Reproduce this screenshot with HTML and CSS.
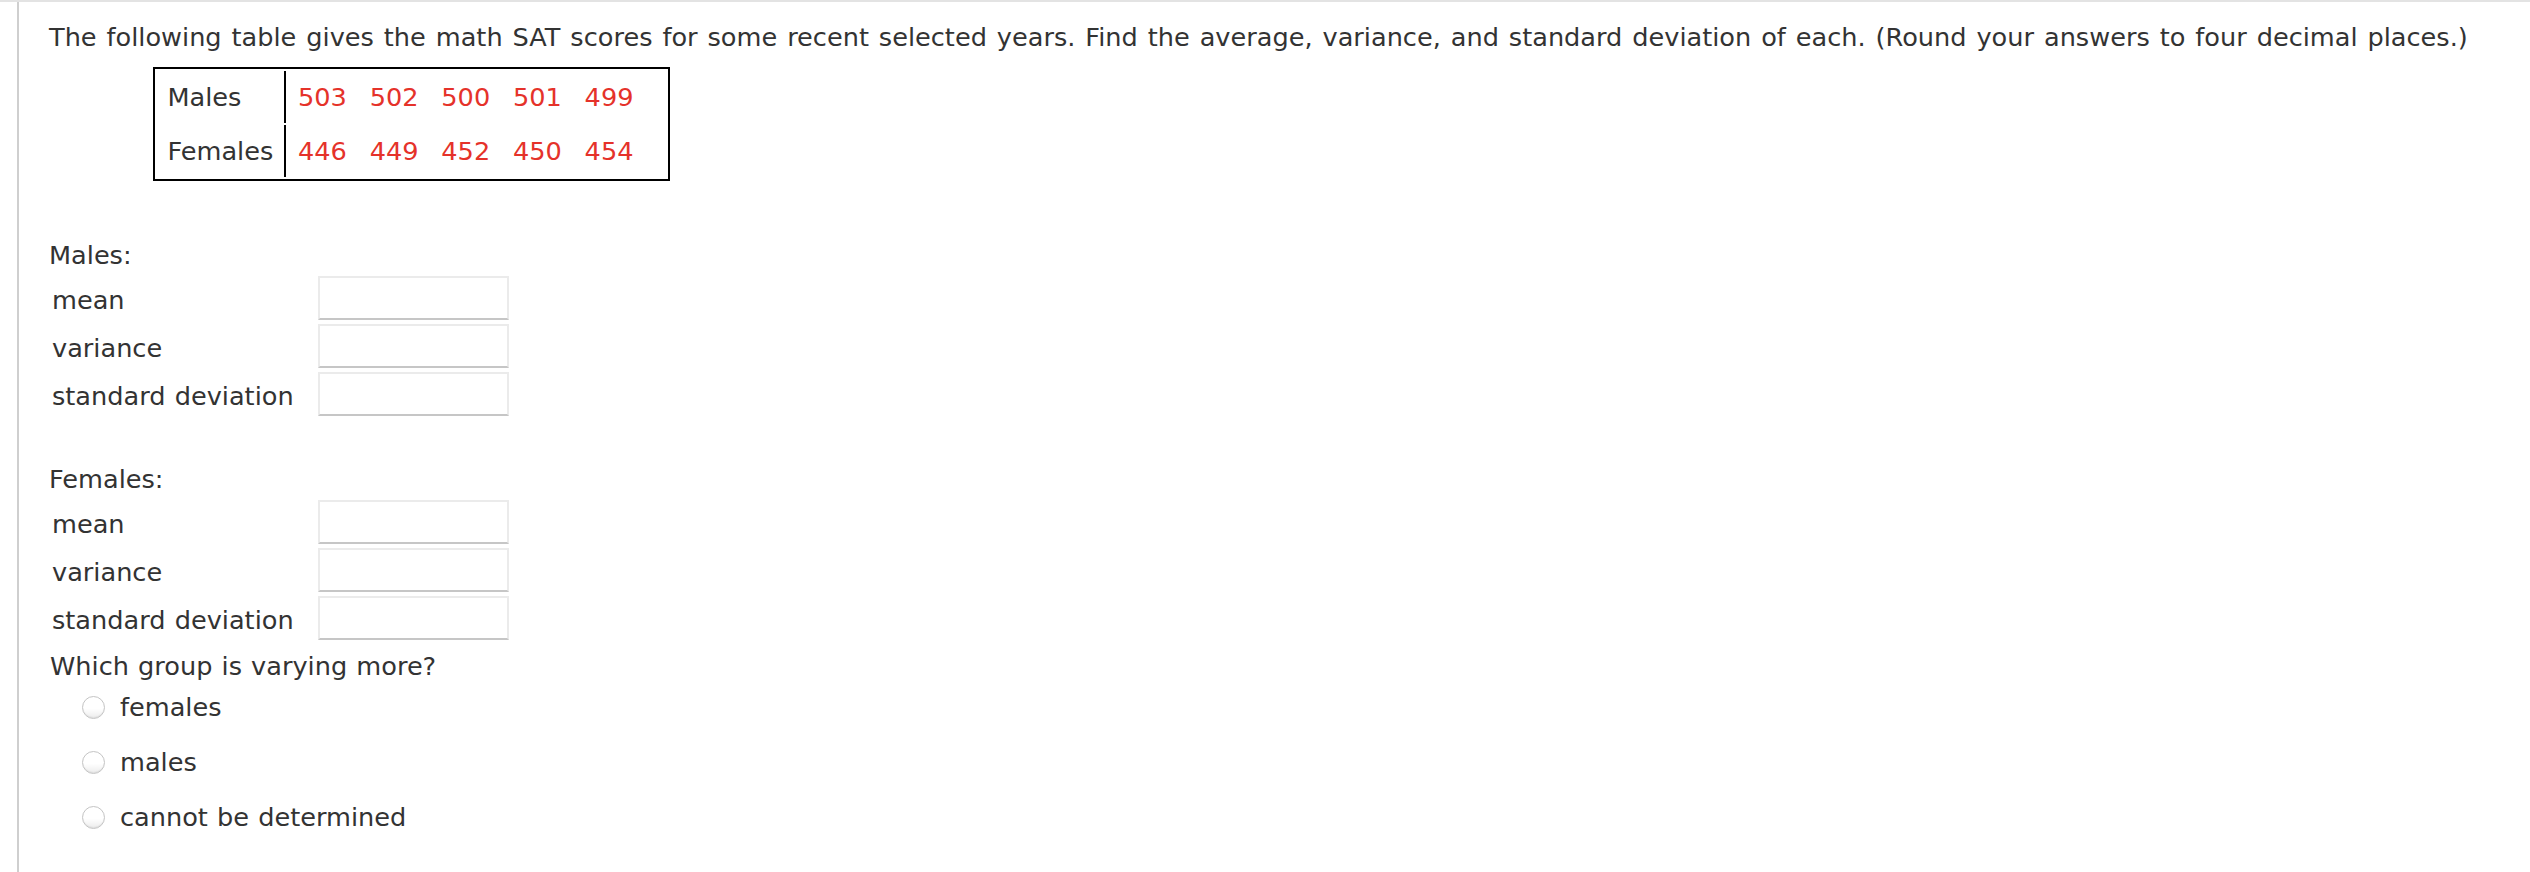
FILE: index.html
```html
<!DOCTYPE html>
<html lang="en">
<head>
<meta charset="utf-8">
<title>SAT scores</title>
<link rel="stylesheet" href="styles.css">
</head>
<body>
<div class="page">
  <div class="frame">
    <p class="prompt">The following table gives the math SAT scores for some recent selected years. Find the average, variance, and standard deviation of each. (Round your answers to four decimal places.)</p>
    <table class="data">
      <tr>
        <th class="rowhead">Males</th>
        <td>503</td><td>502</td><td>500</td><td>501</td><td class="last">499</td>
      </tr>
      <tr>
        <th class="rowhead">Females</th>
        <td>446</td><td>449</td><td>452</td><td>450</td><td class="last">454</td>
      </tr>
    </table>

    <div class="group">
      <div class="group-title">Males:</div>
      <div class="fields">
        <label class="field"><span class="label">mean</span><input class="answer" type="text"></label>
        <label class="field"><span class="label">variance</span><input class="answer" type="text"></label>
        <label class="field"><span class="label">standard deviation</span><input class="answer" type="text"></label>
      </div>
    </div>

    <div class="group second">
      <div class="group-title">Females:</div>
      <div class="fields">
        <label class="field"><span class="label">mean</span><input class="answer" type="text"></label>
        <label class="field"><span class="label">variance</span><input class="answer" type="text"></label>
        <label class="field"><span class="label">standard deviation</span><input class="answer" type="text"></label>
      </div>
    </div>

    <div class="question">Which group is varying more?</div>
    <div class="choices">
      <div class="choice"><span class="radio"></span><span class="choice-text">females</span></div>
      <div class="choice"><span class="radio"></span><span class="choice-text">males</span></div>
      <div class="choice"><span class="radio"></span><span class="choice-text">cannot be determined</span></div>
    </div>
  </div>
</div>
</body>
</html>
```
FILE: styles.css
```css
html, body {
  margin: 0;
  padding: 0;
  background: #ffffff;
}

body {
  font-family: "DejaVu Sans", Verdana, sans-serif;
  font-size: 25.6px;
  color: #333333;
  word-spacing: 1px;
}

.page {
  border-top: 2px solid #e3e3e3;
  height: 870px;
  overflow: hidden;
}

.frame {
  margin-left: 17px;
  border-left: 2px solid #cfcfcf;
  padding-left: 30px;
  height: 100%;
  box-sizing: border-box;
  display: flex;
  flex-direction: column;
  align-items: flex-start;
}

.prompt {
  margin: 0;
  padding-top: 17px;
  line-height: 36px;
  white-space: nowrap;
  word-spacing: 1.8px;
}

.data {
  margin-top: 12px;
  margin-left: 104px;
  border: 2px solid #000000;
  border-collapse: separate;
  border-spacing: 2px;
  word-spacing: 0;
}

.data th,
.data td {
  height: 52px;
  padding: 0 10.4px;
  vertical-align: middle;
  font-weight: normal;
  text-align: left;
}

.data td {
  color: #e5322a;
}

.data .rowhead {
  border-right: 2px solid #000000;
  color: #333333;
}

.data td.last {
  padding-right: 33px;
}

.group {
  margin-top: 56px;
}

.group.second {
  margin-top: 45px;
}

.group-title {
  line-height: 36px;
  margin-bottom: 3px;
}

.fields {
  display: flex;
  flex-direction: column;
  gap: 4px;
}

.field {
  display: flex;
  align-items: center;
  height: 44px;
  padding-left: 3px;
}

.label {
  width: 266px;
  padding-top: 3px;
}

.answer {
  width: 191px;
  height: 44px;
  box-sizing: border-box;
  margin: 0;
  padding: 0 6px;
  border: 2px solid #ebebeb;
  border-bottom: 2px solid #c6c6c6;
  border-radius: 0;
  background: #ffffff;
  font: inherit;
  outline: none;
}

.question {
  margin-top: 8px;
  line-height: 36px;
  padding-left: 1px;
}

.choices {
  margin-top: 5px;
  display: flex;
  flex-direction: column;
  gap: 19px;
}

.choice {
  display: flex;
  align-items: center;
  height: 36px;
  padding-left: 33px;
}

.radio {
  width: 23px;
  height: 23px;
  box-sizing: border-box;
  border-radius: 50%;
  border: 1px solid #c4c4c4;
  background: linear-gradient(#ffffff 0%, #ffffff 55%, #ececec 100%);
  box-shadow: inset 0 -1px 1px rgba(0, 0, 0, 0.06);
  margin-right: 15px;
  flex: none;
}
```
